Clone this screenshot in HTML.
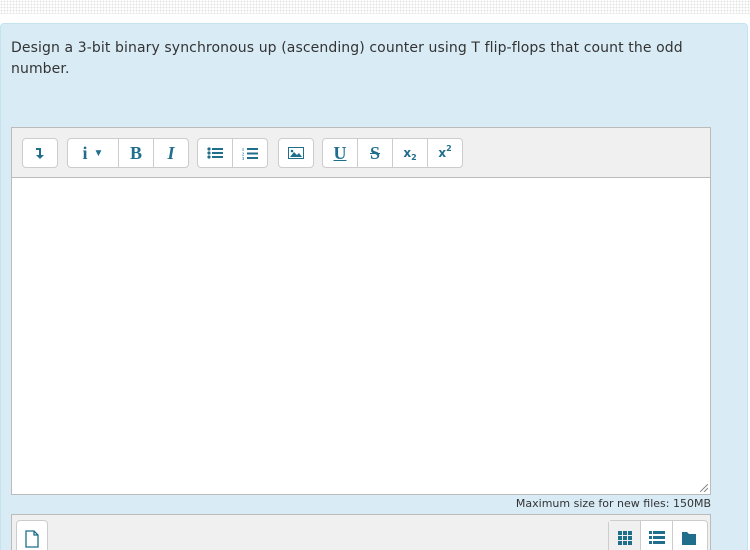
<!DOCTYPE html>
<html><head><style>
html,body{margin:0;width:750px;height:550px;overflow:hidden}
body{background:#fff;font-family:"DejaVu Sans",Verdana,sans-serif;position:relative}
.dots{position:absolute;left:0;top:0;width:750px;height:14px;background-image:radial-gradient(#e4e4e4 0.8px,transparent 1px);background-size:3px 3px}
.box{position:absolute;left:0;top:23px;width:746px;height:540px;background:#d9ecf6;border:1px solid #c4e3ef;border-radius:4px}
.q{position:absolute;left:11px;top:38px;font-size:14px;line-height:21px;color:#333;width:690px;letter-spacing:0.1px}
.ed{position:absolute;left:11px;top:127px;width:698px;height:366px;border:1px solid #bbb;background:#fff}
.tb{height:49px;background:#f0f0f0;border-bottom:1px solid #bbb;position:relative}
.g{position:absolute;top:10px;height:28px;border:1px solid #ccc;border-radius:4px;background:#fff;display:flex}
.g div{width:34px;height:28px;border-right:1px solid #ccc;display:flex;align-items:center;justify-content:center;color:#1e6e8c;font-weight:bold;font-family:"Liberation Serif",serif;font-size:18px}
.g div:last-child{border-right:none}
.max{position:absolute;right:39px;top:497px;font-size:11px;color:#333}
.fp{position:absolute;left:11px;top:514px;width:698px;height:40px;background:#f0f0f0;border:1px solid #bbb}
</style></head><body>
<div class="dots"></div>
<div class="box"></div>
<div class="q">Design a 3-bit binary synchronous up (ascending) counter using T flip-flops that count the odd number.</div>
<div class="ed"><div class="tb">
<div class="g" style="left:10px"><div><svg width="10" height="12"><path d="M1 1h5v7h3l-4 4-4-4h3V3H1z" fill="#1e6e8c"/></svg></div></div>
<div class="g" style="left:55px"><div style="width:50px">i <span style="font-size:10px;margin-left:6px">▼</span></div><div>B</div><div style="font-style:italic">I</div></div>
<div class="g" style="left:185px"><div><svg width="16" height="12"><g fill="#1e6e8c"><circle cx="2" cy="2" r="1.6"/><circle cx="2" cy="6" r="1.6"/><circle cx="2" cy="10" r="1.6"/><rect x="5" y="1" width="11" height="2"/><rect x="5" y="5" width="11" height="2"/><rect x="5" y="9" width="11" height="2"/></g></svg></div><div><svg width="16" height="13"><g fill="#1e6e8c"><rect x="5" y="1" width="11" height="2"/><rect x="5" y="5.5" width="11" height="2"/><rect x="5" y="10" width="11" height="2"/><text x="0" y="4" font-size="4">1</text><text x="0" y="8.5" font-size="4">2</text><text x="0" y="13" font-size="4">3</text></g></svg></div></div>
<div class="g" style="left:266px"><div><svg width="16" height="12"><rect x="0.5" y="0.5" width="15" height="11" fill="#fff" stroke="#1e6e8c"/><path d="M2 10l4-5 3 3 2-2 3 4z" fill="#1e6e8c"/><circle cx="4" cy="4" r="1.3" fill="#1e6e8c"/></svg></div></div>
<div class="g" style="left:310px"><div style="text-decoration:underline">U</div><div style="text-decoration:line-through">S</div><div style="font-family:'DejaVu Sans',sans-serif;font-size:12px">x<span style="font-size:8px;position:relative;top:4px">2</span></div><div style="font-family:'DejaVu Sans',sans-serif;font-size:12px">x<span style="font-size:8px;position:relative;top:-5px">2</span></div></div>
</div>
<svg style="position:absolute;right:2px;bottom:2px" width="8" height="8"><path d="M0 8L8 0M4 8L8 4" stroke="#888"/></svg>
</div>
<div class="max">Maximum size for new files: 150MB</div>
<div class="fp">
<div style="position:absolute;left:4px;top:5px;width:30px;height:36px;background:#fff;border:1px solid #ccc;border-radius:4px"><svg style="position:absolute;left:8px;top:9px" width="14" height="18"><path d="M1 1h8l4 4v12H1z M9 1v4h4" fill="#fff" stroke="#1e6e8c" stroke-width="1.3"/></svg></div>
<div style="position:absolute;left:596px;top:5px;width:98px;height:36px;background:#fff;border:1px solid #ccc;border-radius:4px;display:flex">
<div style="width:32px;background:#f0f0f0;border-right:1px solid #ccc;display:flex;justify-content:center;padding-top:10px;box-sizing:border-box"><svg width="14" height="14" fill="#1e6e8c"><rect x="0" y="0" width="4" height="4"/><rect x="5" y="0" width="4" height="4"/><rect x="10" y="0" width="4" height="4"/><rect x="0" y="5" width="4" height="4"/><rect x="5" y="5" width="4" height="4"/><rect x="10" y="5" width="4" height="4"/><rect x="0" y="10" width="4" height="4"/><rect x="5" y="10" width="4" height="4"/><rect x="10" y="10" width="4" height="4"/></svg></div>
<div style="width:32px;border-right:1px solid #ccc;display:flex;justify-content:center;padding-top:10px;box-sizing:border-box"><svg width="16" height="14" fill="#1e6e8c"><rect x="0" y="0" width="3" height="3"/><rect x="4" y="0" width="12" height="3"/><rect x="0" y="5" width="3" height="3"/><rect x="4" y="5" width="12" height="3"/><rect x="0" y="10" width="3" height="3"/><rect x="4" y="10" width="12" height="3"/></svg></div>
<div style="width:32px;display:flex;justify-content:center;padding-top:10px;box-sizing:border-box"><svg width="14" height="14"><path d="M0 1h5l2 2h7v11H0z" fill="#1e6e8c"/></svg></div>
</div>
</div>
</body></html>
